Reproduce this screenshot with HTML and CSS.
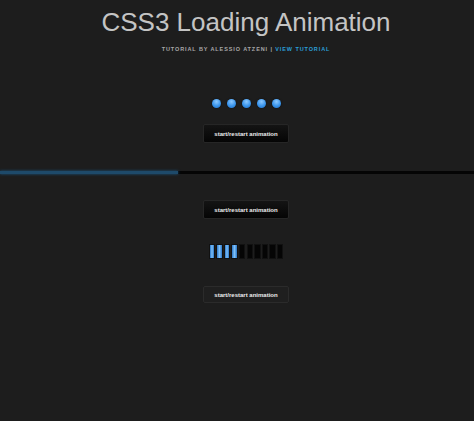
FILE: index.html
```html
<!DOCTYPE html>
<html lang="en">
<head>
<meta charset="utf-8"/>
<title>CSS3 Loading Animation</title>
<link rel="stylesheet" href="styles.css">
</head>
<body>
<div class="page">
<h1>CSS3 Loading Animation</h1>
<p class="credits">Tutorial by Alessio Atzeni | <a href="#">View tutorial</a></p>

<!-- Loader 1: bouncing dots -->
<div class="dots">
<span></span><span></span><span></span><span></span><span></span>
</div>
<button class="btn" type="button">start/restart animation</button>
</div>

<!-- Loader 2: full-width line -->
<div class="line"><div class="line-fill"></div></div>

<div class="page">
<button class="btn" type="button">start/restart animation</button>

<!-- Loader 3: bar blocks -->
<div class="bars">
<span class="on"></span><span class="on"></span><span class="on"></span><span class="on"></span>
<span></span><span></span><span></span><span></span><span></span><span></span>
</div>
<button class="btn btn-flat" type="button">start/restart animation</button>
</div>
</body>
</html>
```

FILE: styles.css
```css
body {
  margin: 0;
  padding: 0;
  background: #1d1d1d;
  font-family: 'Liberation Sans', Arial, sans-serif;
  height: 421px;
}

.page {
  display: flex;
  flex-direction: column;
  align-items: center;
  padding-left: 18px;
}

h1 {
  margin: 5px 0 0;
  font-size: 26px;
  font-weight: normal;
  color: #c4c4c4;
  line-height: 34px;
}

.credits {
  margin: 7px 0 0;
  font-size: 5.5px;
  font-weight: bold;
  letter-spacing: 0.9px;
  text-transform: uppercase;
  color: #a8a8a8;
}

.credits a {
  color: #2a9fd8;
  text-decoration: none;
}

.dots {
  display: flex;
  gap: 6px;
  margin-top: 47px;
}

.dots span {
  width: 9px;
  height: 9px;
  border-radius: 50%;
  background: radial-gradient(circle at 50% 30%, #8cc8ff 0%, #3a95ec 55%, #1f6fc8 100%);
  box-shadow: 0 0 2px rgba(0, 0, 0, 0.6);
}

.btn {
  width: 86px;
  height: 19px;
  padding: 0;
  border: 1px solid #262626;
  border-radius: 2px;
  background: linear-gradient(#141414, #050505);
  color: #eee;
  font-family: 'Liberation Sans', Arial, sans-serif;
  font-size: 6px;
  font-weight: bold;
  cursor: pointer;
}

.page .dots + .btn {
  margin-top: 16px;
}

.line {
  margin-top: 28px;
  height: 3px;
  background: #050505;
}

.line-fill {
  width: 178px;
  height: 3px;
  background: #1e4a6a;
  box-shadow: 0 0 3px #1c5a86;
}

.line + .page .btn {
  margin-top: 26px;
}

.bars {
  display: flex;
  gap: 1.2px;
  margin-top: 25px;
}

.bars span {
  box-sizing: border-box;
  width: 6.4px;
  height: 15px;
  background: #050505;
  border: 0.5px solid #111;
}

.bars span.on {
  background: linear-gradient(to right, #2b77c8, #7ec0f8 50%, #2b77c8);
}

.page .bars + .btn {
  margin-top: 27px;
  height: 17px;
  background: #1f1f1f;
  border-color: #2b2b2b;
}
```
